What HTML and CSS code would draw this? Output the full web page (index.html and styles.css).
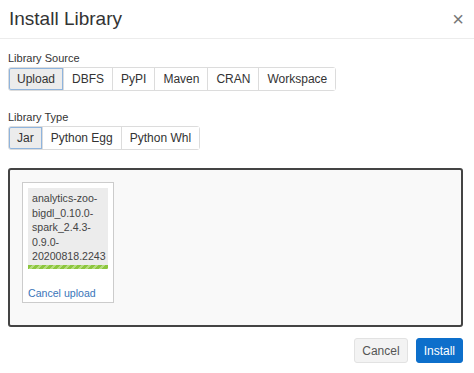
FILE: index.html
```html
<!DOCTYPE html>
<html>
<head>
    <meta charset="UTF-8">
    <title>Install Library</title>
    <link rel="stylesheet" href="styles.css">
</head>
<body>
<section class="modal">
    <div class="modal-header">
        <h1>Install Library</h1>
        <button class="close">&times;</button>
    </div>

    <div class="modal-body">
        <p class="field-label">Library Source</p>
        <div class="btn-group">
            <button class="active">Upload</button>
            <button>DBFS</button>
            <button>PyPI</button>
            <button>Maven</button>
            <button>CRAN</button>
            <button>Workspace</button>
        </div>

        <p class="field-label type-label">Library Type</p>
        <div class="btn-group">
            <button class="active">Jar</button>
            <button>Python Egg</button>
            <button>Python Whl</button>
        </div>

        <div class="dropzone">
            <div class="file-card">
                <div class="file-name">
                    analytics-zoo-<br>bigdl_0.10.0-<br>spark_2.4.3-<br>0.9.0-<br>20200818.2243
                </div>
                <div class="progress"></div>
                <a class="cancel-link" href="#">Cancel upload</a>
            </div>
        </div>
    </div>

    <div class="modal-footer">
        <button class="btn">Cancel</button>
        <button class="btn btn-primary">Install</button>
    </div>
</section>
</body>
</html>
```

FILE: styles.css
```css
* {
    box-sizing: border-box;
}

html, body {
    margin: 0;
    height: 100%;
}

body {
    font-family: "Liberation Sans", Arial, sans-serif;
    color: #333333;
    background: #ffffff;
}

.modal {
    width: 474px;
}

.modal-header {
    display: flex;
    justify-content: space-between;
    align-items: center;
    height: 39px;
    padding: 0 10px 0 9px;
    border-bottom: 1px solid #ececec;
}

h1 {
    margin: 0;
    font-size: 19px;
    font-weight: normal;
    color: #333333;
}

.close {
    border: none;
    background: none;
    padding: 0;
    font-size: 20px;
    line-height: 20px;
    color: #777777;
    cursor: pointer;
    font-family: "Liberation Sans", Arial, sans-serif;
}

.modal-body {
    padding: 13px 11px 0 8px;
}

.field-label {
    margin: 0 0 2px 0;
    font-size: 11px;
    line-height: 13px;
    color: #333333;
}

.type-label {
    margin-top: 20px;
}

.btn-group {
    display: inline-flex;
    border: 1px solid #dcdcdc;
    border-radius: 3px;
}

.btn-group button {
    height: 22px;
    padding: 0 8px;
    margin: 0;
    font-family: "Liberation Sans", Arial, sans-serif;
    font-size: 12px;
    color: #333333;
    background: #ffffff;
    border: none;
    border-left: 1px solid #dcdcdc;
}

.btn-group button:first-child {
    border-left: none;
    border-radius: 2px 0 0 2px;
}

.btn-group button.active {
    background: #ececec;
    box-shadow: inset 0 0 0 1px #8fb4dd;
}

.dropzone {
    margin-top: 18px;
    height: 159px;
    padding: 12px;
    border: 2px solid #444444;
    border-radius: 3px;
    background: #f9f9f9;
}

.file-card {
    width: 92px;
    height: 121px;
    padding: 5px;
    border: 1px solid #cccccc;
    background: #ffffff;
}

.file-name {
    padding: 3px 4px 1px 4px;
    background: #ececec;
    font-size: 10.6px;
    line-height: 14.5px;
    color: #444444;
}

.progress {
    height: 4px;
    background: repeating-linear-gradient(135deg, #8cc63f 0, #8cc63f 3px, #b5dc7d 3px, #b5dc7d 5px);
}

.cancel-link {
    display: block;
    margin-top: 18px;
    font-size: 10.6px;
    color: #3a75b9;
    text-decoration: none;
}

.modal-footer {
    display: flex;
    justify-content: flex-end;
    gap: 8px;
    padding: 11px 11px 0 0;
}

.btn {
    height: 25px;
    padding: 0 7px;
    font-family: "Liberation Sans", Arial, sans-serif;
    font-size: 12px;
    color: #555555;
    background: #f3f3f3;
    border: 1px solid #e2e2e2;
    border-radius: 3px;
}

.btn-primary {
    color: #ffffff;
    background: #0d6fcb;
    border-color: #0d6fcb;
}
```
